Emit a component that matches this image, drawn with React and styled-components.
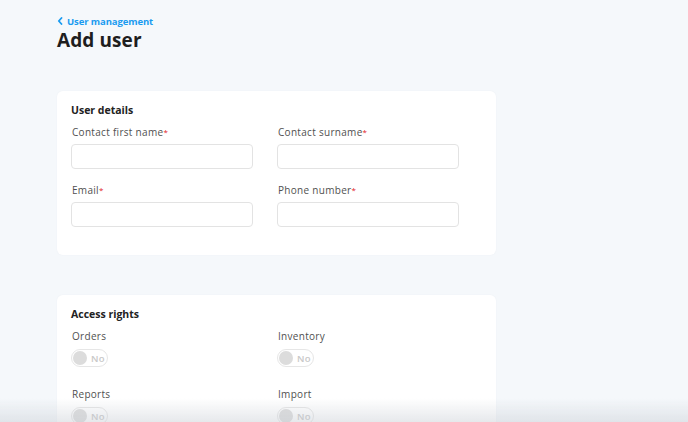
import React from "react";
import styled, { createGlobalStyle } from "styled-components";

const Global = createGlobalStyle`
  html, body { margin: 0; padding: 0; background: #f5f8fb; }
  body { font-family: "Open Sans", "Noto Sans", sans-serif; color: #222; }
  * { box-sizing: border-box; }
`;

const Page = styled.div`
  min-height: 422px;
  padding: 14px 0 0 57px;
  display: flex;
  flex-direction: column;
`;

const Back = styled.a`
  display: flex;
  align-items: center;
  gap: 4px;
  color: #1a9bf0;
  font-size: 9.5px;
  font-weight: 700;
  text-decoration: none;
  height: 14px;
  letter-spacing: -0.1px;
`;

const Title = styled.h1`
  margin: -2px 0 0;
  font-size: 19px;
  font-weight: 700;
  color: #1e1e1e;
  line-height: 28px;
  letter-spacing: 0.1px;
`;

const Card = styled.section`
  width: 439px;
  background: #fff;
  border-radius: 6px;
  box-shadow: 0 0 2px rgba(40, 60, 90, 0.04);
  padding: 12px 14px 0;
  margin-top: ${p => p.$mt}px;
  height: ${p => p.$h}px;
`;

const CardTitle = styled.h2`
  margin: 0;
  font-size: 10.5px;
  font-weight: 700;
  color: #222;
  line-height: 14px;
`;

const Grid = styled.div`
  display: grid;
  grid-template-columns: 182px 182px;
  column-gap: 24px;
  row-gap: ${p => p.$rg}px;
  margin-top: 8px;
`;

const Field = styled.div`
  display: flex;
  flex-direction: column;
`;

const Label = styled.label`
  font-size: 10px;
  color: #505050;
  line-height: 14px;
  padding-left: 1px;
  letter-spacing: 0.3px;
`;

const Req = styled.span`
  color: #e21b1b;
  font-size: 8px;
  vertical-align: top;
`;

const Input = styled.input`
  margin-top: 5px;
  height: 25px;
  width: 182px;
  border: 1px solid #e3e3e3;
  border-radius: 4px;
  background: #fff;
  outline: none;
`;

const Toggle = styled.div`
  margin-top: 6px;
  width: 37px;
  height: 18px;
  border: 1px solid #e6e6e6;
  border-radius: 9px;
  display: flex;
  align-items: center;
  padding-left: 1px;
  gap: 4px;
`;

const Knob = styled.span`
  width: 14px;
  height: 14px;
  border-radius: 50%;
  background: #dcdcdc;
`;

const ToggleText = styled.span`
  font-size: 9.5px;
  color: #c8c8c8;
  font-weight: 600;
  letter-spacing: 0.3px;
`;

const BottomFade = styled.div`
  position: fixed;
  left: 0;
  right: 0;
  bottom: 0;
  height: 24px;
  background: linear-gradient(to bottom, rgba(200, 205, 212, 0), rgba(200, 205, 212, 0.45));
  pointer-events: none;
`;

const Chevron = () => (
  <svg width="6" height="8" viewBox="0 0 6 8">
    <path d="M4.5 1 L1.8 4 L4.5 7" fill="none" stroke="#1a9bf0" strokeWidth="1.8" strokeLinecap="round" strokeLinejoin="round" />
  </svg>
);

const fields = ["Contact first name", "Contact surname", "Email", "Phone number"];

const rights = ["Orders", "Inventory", "Reports", "Import"];

export default function App() {
  return (
    <>
      <Global />
      <Page>
        <Back href="#"><Chevron />User management</Back>
        <Title>Add user</Title>
        <Card $mt={37} $h={164}>
          <CardTitle>User details</CardTitle>
          <Grid $rg={14}>
            {fields.map(f => (
              <Field key={f}>
                <Label>{f}<Req>*</Req></Label>
                <Input />
              </Field>
            ))}
          </Grid>
        </Card>
        <Card $mt={40} $h={160}>
          <CardTitle>Access rights</CardTitle>
          <Grid $rg={20}>
            {rights.map(r => (
              <Field key={r}>
                <Label>{r}</Label>
                <Toggle><Knob /><ToggleText>No</ToggleText></Toggle>
              </Field>
            ))}
          </Grid>
        </Card>
      </Page>
      <BottomFade />
    </>
  );
}
